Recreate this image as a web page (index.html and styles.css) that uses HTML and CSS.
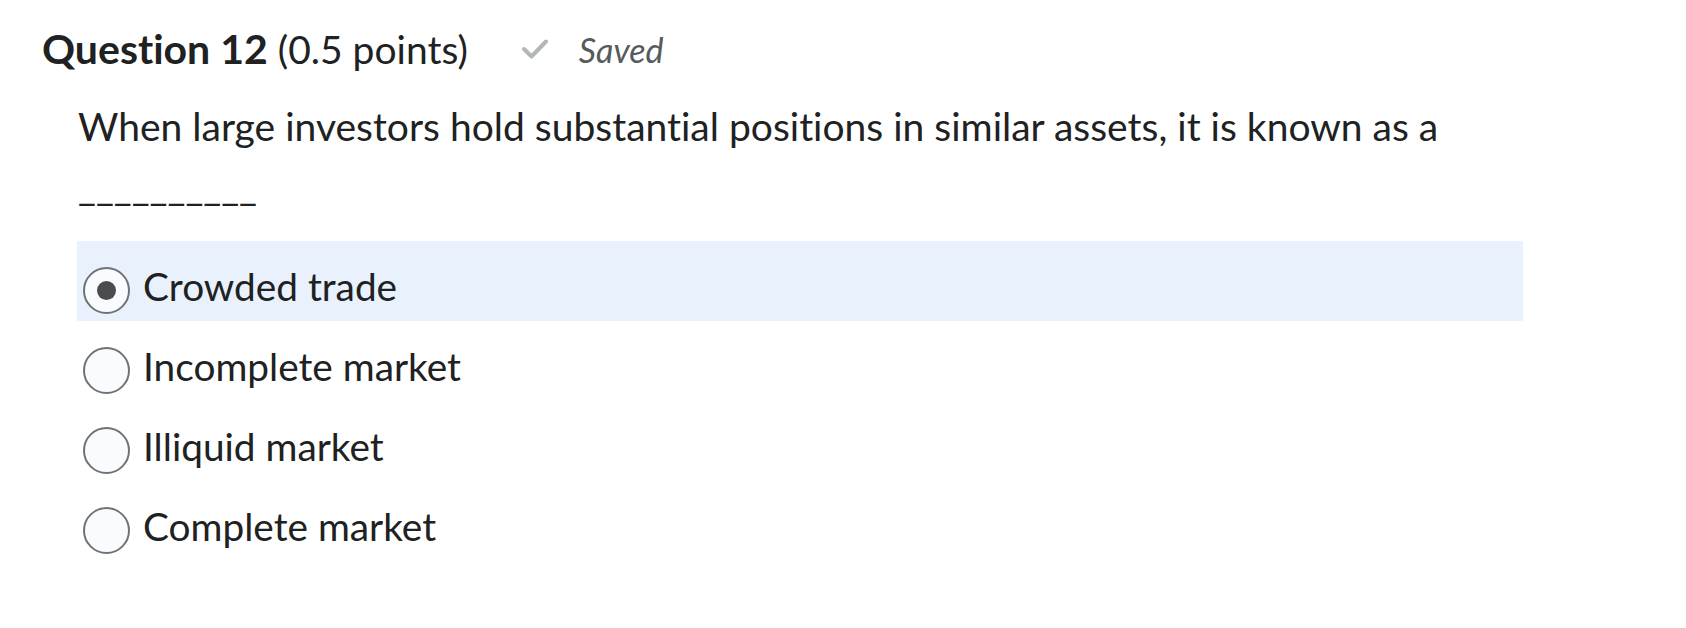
FILE: index.html
```html
<!DOCTYPE html>
<html>
<head>
<meta charset="utf-8">
<link rel="stylesheet" href="styles.css">
</head>
<body>
<div class="question">
  <div class="header">
    <h2 class="title"><strong>Question 12</strong> <span class="points">(0.5 points)</span></h2>
    <div class="saved">
      <svg class="check" viewBox="0 0 28 22" width="28" height="22"><path d="M3 11 L10.5 18.5 L25 3.5" fill="none" stroke="#b1b6b9" stroke-width="4" stroke-linecap="round" stroke-linejoin="round"/></svg>
      <span class="saved-text">Saved</span>
    </div>
  </div>
  <div class="body">
    <p class="prompt">When large investors hold substantial positions in similar assets, it is known as a __________</p>
    <div class="options">
      <label class="option selected"><span class="radio checked"></span><span class="opt-text">Crowded trade</span></label>
      <label class="option"><span class="radio"></span><span class="opt-text">Incomplete market</span></label>
      <label class="option"><span class="radio"></span><span class="opt-text">Illiquid market</span></label>
      <label class="option"><span class="radio"></span><span class="opt-text">Complete market</span></label>
    </div>
  </div>
</div>
</body>
</html>
```

FILE: styles.css
```css
html, body {
  margin: 0;
  padding: 0;
  background: #ffffff;
}
body {
  font-family: Lato, "Open Sans", sans-serif;
  color: #202122;
  font-variant-ligatures: none;
}
.question {
  padding: 24px 0 0 42px;
}
.header {
  display: flex;
  align-items: center;
  height: 50px;
}
.title {
  margin: 0;
  font-size: 39px;
  font-weight: 400;
  line-height: 50px;
}
.title strong {
  font-weight: 700;
  font-size: 41px;
}
.saved {
  display: flex;
  align-items: center;
  margin-left: 53px;
  gap: 30px;
}
.check {
  display: block;
}
.saved-text {
  font-style: italic;
  font-size: 34px;
  color: #565a5c;
}
.body {
  padding-left: 35px;
}
.prompt {
  margin: 23px 0 26px 1px;
  font-size: 39px;
  line-height: 59px;
  width: 1420px;
}
.options {
  width: 1446px;
  display: flex;
  flex-direction: column;
}
.option {
  display: flex;
  align-items: flex-end;
  height: 80px;
  box-sizing: border-box;
  padding: 0 0 7px 6px;
}
.option.selected {
  background: #e9f2fc;
}
.radio {
  width: 47px;
  height: 47px;
  box-sizing: border-box;
  border: 2px solid #6e7376;
  border-radius: 50%;
  background: #f9fbff;
  flex: none;
  display: flex;
  align-items: center;
  justify-content: center;
}
.radio.checked::after {
  content: "";
  width: 19px;
  height: 19px;
  border-radius: 50%;
  background: #494c4e;
}
.opt-text {
  font-size: 38.8px;
  margin-left: 13px;
  line-height: 47px;
  padding-bottom: 4px;
}
```
